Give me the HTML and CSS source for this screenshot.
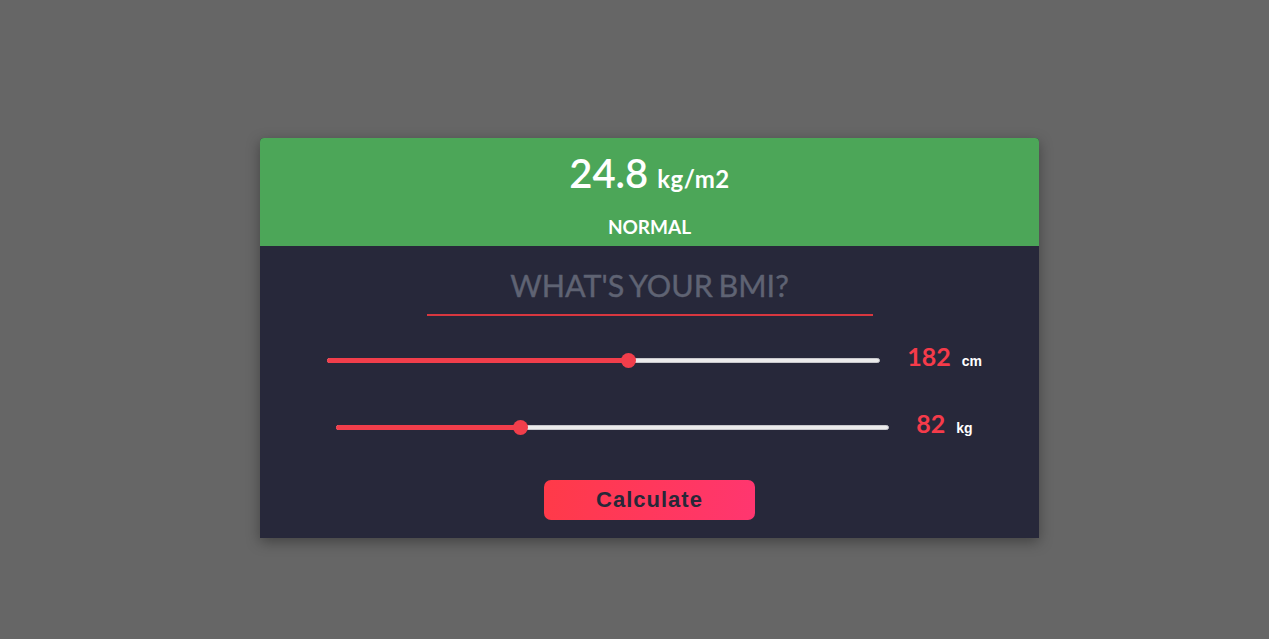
FILE: index.html
```html
<!DOCTYPE html>
<html lang="en">
<head>
<meta charset="utf-8">
<title>BMI Calculator</title>
<link rel="stylesheet" href="styles.css">
</head>
<body>
<main class="page">
  <section class="card">
    <header class="result">
      <div class="result-value"><span class="bmi">24.8</span><span class="bmi-unit">kg/m2</span></div>
      <div class="result-label">NORMAL</div>
    </header>
    <div class="form">
      <h1 class="title">WHAT'S YOUR BMI?</h1>
      <div class="row">
        <div class="slider">
          <div class="track"><div class="fill" style="width:54.6%"></div><div class="thumb" style="left:54.6%"></div></div>
        </div>
        <div class="value"><span class="num">182</span><span class="unit">cm</span></div>
      </div>
      <div class="row row-second">
        <div class="slider">
          <div class="track"><div class="fill" style="width:33.3%"></div><div class="thumb" style="left:33.3%"></div></div>
        </div>
        <div class="value"><span class="num">82</span><span class="unit">kg</span></div>
      </div>
      <div class="actions"><button class="btn">Calculate</button></div>
    </div>
  </section>
</main>
</body>
</html>
```
FILE: styles.css
```css
* { box-sizing: border-box; }
html, body { margin: 0; padding: 0; }
body {
  background: #666666;
  font-family: Lato, "Noto Sans", sans-serif;
  height: 639px;
  overflow: hidden;
}
.page {
  display: flex;
  justify-content: center;
  padding: 138px 0 0 30px;
}
.card {
  width: 779px;
  background: #27283a;
  border-radius: 4px 4px 0 0;
  box-shadow: 0 4px 14px rgba(0, 0, 0, 0.35);
}
.result {
  height: 108px;
  background: #4ca658;
  border-radius: 4px 4px 0 0;
  color: #ffffff;
  text-align: center;
  padding-top: 12px;
}
.result-value {
  line-height: 46px;
}
.bmi {
  font-size: 40px;
  font-weight: 600;
}
.bmi-unit {
  font-size: 24px;
  font-weight: 700;
  letter-spacing: 0.5px;
  margin-left: 9px;
}
.result-label {
  margin-top: 10px;
  font-size: 19px;
  font-weight: 700;
  line-height: 24px;
}
.form {
  padding: 22px 0 18px;
}
.title {
  width: 446px;
  margin: 0 auto;
  font-size: 30.5px;
  font-weight: 400;
  line-height: 34px;
  word-spacing: -2px;
  color: #5f6373;
  -webkit-text-stroke: 0.4px #5f6373;
  text-align: center;
  padding-bottom: 12px;
  border-bottom: 2px solid #d8373f;
}
.row {
  display: flex;
  justify-content: center;
  align-items: center;
  gap: 27px;
  padding-left: 10px;
  margin-top: 29px;
  height: 30px;
}
.row-second {
  margin-top: 37px;
}
.slider {
  width: 553px;
}
.track {
  position: relative;
  height: 5px;
  border-radius: 3px;
  background: #ebebeb;
  border: 1px solid #c8c8cc;
}
.fill {
  position: absolute;
  left: -1px;
  top: -1px;
  bottom: -1px;
  background: #f13e4b;
  border-radius: 3px 0 0 3px;
}
.thumb {
  position: absolute;
  top: 50%;
  width: 15px;
  height: 15px;
  margin: -7.5px 0 0 -7.5px;
  border-radius: 50%;
  background: #f13e4b;
}
.value {
  display: flex;
  align-items: baseline;
  gap: 11px;
  margin-bottom: 8px;
}
.num {
  font-size: 25px;
  font-weight: 700;
  color: #f53b4a;
  line-height: 30px;
}
.unit {
  font-family: "Liberation Sans", Arial, sans-serif;
  font-size: 14px;
  font-weight: 700;
  color: #ffffff;
}
.actions {
  display: flex;
  justify-content: center;
  margin-top: 38px;
}
.btn {
  width: 211px;
  height: 40px;
  border: 0;
  border-radius: 7px;
  background: linear-gradient(100deg, #ff3a48 0%, #ff3670 100%);
  color: #272838;
  font-family: "Liberation Sans", Arial, sans-serif;
  font-size: 22px;
  font-weight: 700;
  letter-spacing: 1px;
  padding: 0;
}
```
